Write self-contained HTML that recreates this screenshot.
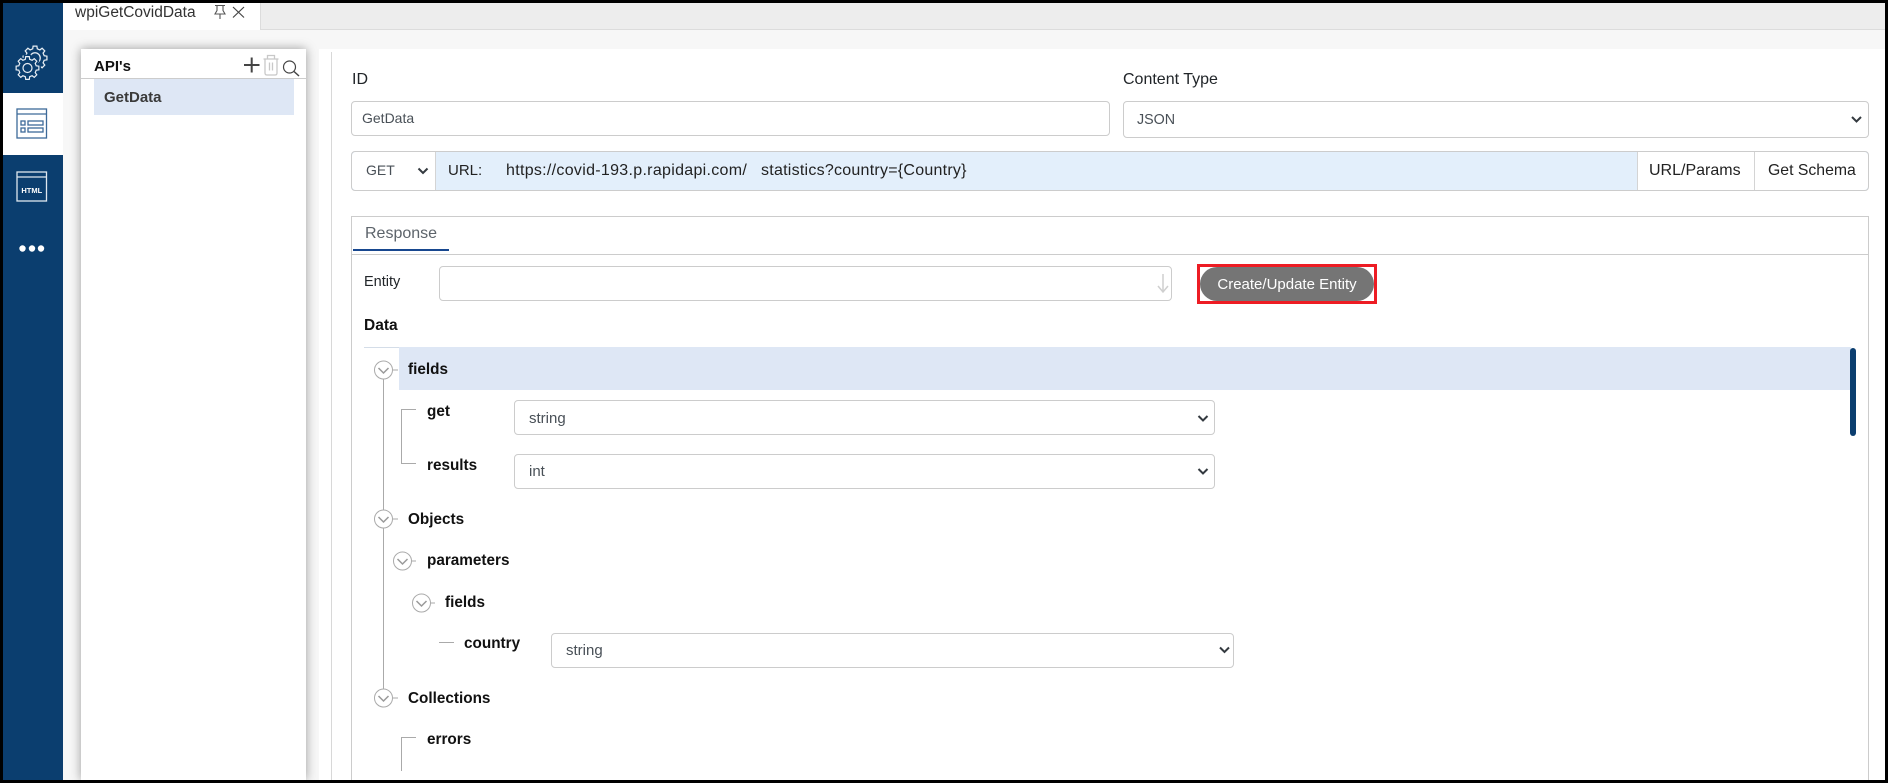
<!DOCTYPE html>
<html style="overflow:hidden;height:783px;"><head><meta charset="utf-8"><style>
html,body{margin:0;padding:0;background:#000;}
body{width:1888px;height:783px;overflow:hidden;position:relative;font-family:"Liberation Sans",sans-serif;color:#212529;}
.a{position:absolute;box-sizing:border-box;}
.t{position:absolute;white-space:pre;line-height:20px;font-size:14px;}
.b{font-weight:bold;font-size:15.300px;color:#111;}
.box{position:absolute;box-sizing:border-box;border:1px solid #ccc;border-radius:4px;background:#fff;}
.g{color:#495057;}
svg{position:absolute;overflow:visible;}
</style></head><body>
<div class="a" style="left:3px;top:3px;width:1882px;height:777px;background:#fff;overflow:hidden;">
</div>
<!-- backgrounds -->
<div class="a" style="left:63px;top:3px;width:1822px;height:27px;background:#ededed;border-bottom:1px solid #dcdcdc;"></div>
<div class="a" style="left:63px;top:30px;width:1822px;height:19px;background:#f7f7f7;"></div>
<div class="a" style="left:63px;top:49px;width:256px;height:731px;background:#f7f7f7;"></div>
<div class="a" style="left:63px;top:3px;width:198px;height:27px;background:#fff;border-right:1px solid #dcdcdc;"></div>
<div class="t" style="left:75px;top:3px;font-size:15.500px;line-height:20px;color:#333;">wpiGetCovidData</div>
<svg style="left:0;top:0" width="1888" height="783">
 <g fill="none" stroke="#555" stroke-width="1.1"><path d="M215 5.500h10M217 5.500v5l-2 3.500h10l-2-3.500v-5M220 14v5"/></g>
 <path d="M233 7l11 10.500M244 7l-11 10.500" stroke="#444" stroke-width="1.200" fill="none"/>
</svg>
<!-- sidebar -->
<div class="a" style="left:3px;top:3px;width:60px;height:777px;background:#0b3e6f;"></div>
<div class="a" style="left:3px;top:93px;width:60px;height:62px;background:#fff;"></div>
<svg style="left:0;top:0" width="70" height="260">
 <g fill="none" stroke="#e8eef4" stroke-width="1.200">
  <g transform="translate(35 58) scale(1.050)">
   <path d="M8.730 -2.180L11.360 -1.800L11.360 1.800L8.730 2.180L7.710 4.640L9.300 6.760L6.760 9.300L4.640 7.710L2.180 8.730L1.800 11.360L-1.800 11.360L-2.180 8.730L-4.640 7.710L-6.760 9.300L-9.300 6.760L-7.710 4.640L-8.730 2.180L-11.360 1.800L-11.360 -1.800L-8.730 -2.180L-7.710 -4.640L-9.300 -6.760L-6.760 -9.300L-4.640 -7.710L-2.180 -8.730L-1.800 -11.360L1.800 -11.360L2.180 -8.730L4.640 -7.710L6.760 -9.300L9.300 -6.760L7.710 -4.640Z"/>
   <circle r="5"/>
  </g>
  <g transform="translate(27.500 68)">
   <path fill="#0b3e6f" stroke="#0b3e6f" stroke-width="4" d="M8.730 -2.180L11.360 -1.800L11.360 1.800L8.730 2.180L7.710 4.640L9.300 6.760L6.760 9.300L4.640 7.710L2.180 8.730L1.800 11.360L-1.800 11.360L-2.180 8.730L-4.640 7.710L-6.760 9.300L-9.300 6.760L-7.710 4.640L-8.730 2.180L-11.360 1.800L-11.360 -1.800L-8.730 -2.180L-7.710 -4.640L-9.300 -6.760L-6.760 -9.300L-4.640 -7.710L-2.180 -8.730L-1.800 -11.360L1.800 -11.360L2.180 -8.730L4.640 -7.710L6.760 -9.300L9.300 -6.760L7.710 -4.640Z"/>
   <path d="M8.730 -2.180L11.360 -1.800L11.360 1.800L8.730 2.180L7.710 4.640L9.300 6.760L6.760 9.300L4.640 7.710L2.180 8.730L1.800 11.360L-1.800 11.360L-2.180 8.730L-4.640 7.710L-6.760 9.300L-9.300 6.760L-7.710 4.640L-8.730 2.180L-11.360 1.800L-11.360 -1.800L-8.730 -2.180L-7.710 -4.640L-9.300 -6.760L-6.760 -9.300L-4.640 -7.710L-2.180 -8.730L-1.800 -11.360L1.800 -11.360L2.180 -8.730L4.640 -7.710L6.760 -9.300L9.300 -6.760L7.710 -4.640Z"/>
   <circle r="4.500"/>
  </g>
 </g>
 <g fill="none" stroke="#3d6a99" stroke-width="1.300">
  <rect x="17" y="109" width="29.500" height="29"/><path d="M17 114h29.500"/>
  <rect x="21" y="121" width="4" height="4"/><rect x="21" y="128" width="4" height="4"/>
  <rect x="28" y="121" width="15" height="4"/><rect x="28" y="128" width="15" height="4"/>
 </g>
 <g fill="none" stroke="#dfe7ef" stroke-width="1.300">
  <rect x="17" y="172" width="29.500" height="29"/><path d="M17 177h29.500"/>
 </g>
 <text x="31.800" y="193" fill="#fff" font-family="Liberation Sans" font-weight="bold" font-size="7.500" text-anchor="middle">HTML</text>
 <circle cx="22.500" cy="248.500" r="3.200" fill="#fff"/><circle cx="32" cy="248.500" r="3.200" fill="#fff"/><circle cx="41" cy="248.500" r="3.200" fill="#fff"/>
</svg>
<!-- API panel -->
<div class="a" style="left:81px;top:49px;width:225px;height:731px;background:#fff;box-shadow:0 0 10px rgba(0,0,0,.38);"></div>
<div class="a" style="left:81px;top:78px;width:225px;height:1px;background:#ccc;"></div>
<div class="t" style="left:94px;top:57px;font-size:15px;font-weight:bold;color:#111;">API's</div>
<div class="a" style="left:94px;top:79px;width:200px;height:36px;background:#dee7f5;"></div>
<div class="t" style="left:104px;top:88px;font-size:15px;font-weight:bold;color:#3a3a3a;">GetData</div>
<svg style="left:0;top:0" width="310" height="90">
 <path d="M244 65h15.500M251.700 57.500v15" stroke="#444" stroke-width="2" fill="none"/>
 <g fill="none" stroke="#c8c8c8" stroke-width="1.300"><path d="M263.500 59h15M265 59v14q0 2 2 2h8q2 0 2-2v-14M267.500 59v-3.500h7v3.500M269.500 62.500v8M272.500 62.500v8"/></g>
 <circle cx="289.500" cy="67" r="6" fill="none" stroke="#444" stroke-width="1.200"/>
 <path d="M294 71.500l5 4.500" stroke="#444" stroke-width="1.500" fill="none"/>
</svg>
<!-- main -->
<div class="a" style="left:319px;top:49px;width:1566px;height:731px;background:#fff;"></div>
<div class="a" style="left:331px;top:52px;width:1px;height:728px;background:#d8d8d8;"></div>
<div class="t" style="left:352px;top:70px;font-size:16px;">ID</div>
<div class="t" style="left:1123px;top:70px;font-size:16px;">Content Type</div>
<div class="box" style="left:351px;top:101px;width:759px;height:35px;"></div>
<div class="t g" style="left:362px;top:108px;font-size:14px;">GetData</div>
<div class="box" style="left:1123px;top:101px;width:746px;height:37px;"></div>
<div class="t g" style="left:1137px;top:110px;font-size:14.300px;">JSON</div>
<!-- url row -->
<div class="box" style="left:351px;top:151px;width:1518px;height:40px;background:#e3effb;"></div>
<div class="a" style="left:352px;top:152px;width:84px;height:38px;background:#fff;border-right:1px solid #d4d4d4;border-radius:4px 0 0 4px;"></div>
<div class="a" style="left:1637px;top:152px;width:231px;height:38px;background:#fff;border-left:1px solid #d4d4d4;border-radius:0 4px 4px 0;"></div>
<div class="a" style="left:1754px;top:152px;width:1px;height:38px;background:#d4d4d4;"></div>
<div class="t g" style="left:366px;top:160px;font-size:14px;">GET</div>
<div class="t" style="left:448px;top:161px;color:#222;font-size:15px;">URL:</div>
<div class="t" style="left:506px;top:161px;color:#222;font-size:16px;letter-spacing:.3px;">https://covid-193.p.rapidapi.com/</div>
<div class="t" style="left:761px;top:161px;color:#222;font-size:16px;letter-spacing:.25px;">statistics?country={Country}</div>
<div class="t" style="left:1649px;top:161px;color:#222;font-size:16px;">URL/Params</div>
<div class="t" style="left:1768px;top:161px;color:#222;font-size:15.800px;">Get Schema</div>
<!-- response panel -->
<div class="a" style="left:351px;top:216px;width:1518px;height:566px;border:1px solid #ccc;"></div>
<div class="a" style="left:352px;top:254px;width:1516px;height:1px;background:#ccc;"></div>
<div class="t" style="left:365px;top:224px;color:#5d646b;font-size:16px;">Response</div>
<div class="a" style="left:353px;top:249px;width:96px;height:2px;background:#17478f;"></div>
<div class="t" style="left:364px;top:272px;font-size:14.500px;">Entity</div>
<div class="box" style="left:439px;top:266px;width:733px;height:35px;"></div>
<svg style="left:0;top:0" width="1888" height="783">
 <path d="M1163 274v17M1158 286l5 6 5-6" fill="none" stroke="#cfcfcf" stroke-width="1.500"/>
</svg>
<div class="a" style="left:1197px;top:264px;width:180px;height:40px;border:3px solid #ed1c24;background:#fff;"></div>
<div class="a" style="left:1200px;top:267px;width:174px;height:34px;background:#757575;border-radius:17px;"></div>
<div class="t" style="left:1200px;top:275px;width:174px;text-align:center;color:#fff;font-size:15px;">Create/Update Entity</div>
<div class="t b" style="left:364px;top:316px;font-size:15.500px;">Data</div>
<!-- tree -->
<div class="a" style="left:364px;top:347px;width:1487px;height:1px;background:#d4dde8;"></div>
<div class="a" style="left:399px;top:347px;width:1452px;height:43px;background:#dee7f5;"></div>
<div class="a" style="left:1850px;top:348px;width:6px;height:88px;background:#0b3e6f;border-radius:3px;"></div>
<div class="box" style="left:514px;top:400px;width:701px;height:35px;"></div>
<div class="box" style="left:514px;top:454px;width:701px;height:35px;"></div>
<div class="box" style="left:551px;top:633px;width:683px;height:35px;"></div>
<svg style="left:0;top:0" width="1888" height="783">
 <g fill="none" stroke="#aaa" stroke-width="1">
  <path d="M383.500 379v310"/>
  <path d="M416 409.500h-14.500v54H416"/>
  <path d="M416 737.500h-14.500V771"/>
  <path d="M439 642.500h15"/>
  <path d="M393 370h5M393 519h5M393 698h5M411 561h5M430 603h5"/>
  <g fill="#fff">
  <circle cx="383.500" cy="370" r="9"/><circle cx="383.500" cy="519" r="9"/><circle cx="383.500" cy="698" r="9"/>
  <circle cx="402.500" cy="561" r="9"/><circle cx="421.500" cy="603" r="9"/></g>
 </g>
 <g fill="none" stroke="#999" stroke-width="1.500">
  <path d="M378.500 368l5 5 5-5M378.500 517l5 5 5-5M378.500 696l5 5 5-5M397.500 559l5 5 5-5M416.500 601l5 5 5-5"/>
 </g>
 <g fill="none" stroke="#343a40" stroke-width="2">
  <path d="M418.500 168.500l4.500 4.500 4.500-4.500"/>
  <path d="M1852 117l4.500 4.500 4.500-4.500"/>
  <path d="M1198.500 416l4.500 4.500 4.500-4.500"/>
  <path d="M1198.500 469l4.500 4.500 4.500-4.500"/>
  <path d="M1220 647.500l4.500 4.500 4.500-4.500"/>
 </g>
</svg>
<div class="t b" style="left:408px;top:360px;">fields</div>
<div class="t b" style="left:427px;top:402px;">get</div>
<div class="t g" style="left:529px;top:409px;font-size:15px;">string</div>
<div class="t b" style="left:427px;top:456px;">results</div>
<div class="t g" style="left:529px;top:462px;font-size:15px;">int</div>
<div class="t b" style="left:408px;top:510px;">Objects</div>
<div class="t b" style="left:427px;top:551px;">parameters</div>
<div class="t b" style="left:445px;top:593px;">fields</div>
<div class="t b" style="left:464px;top:634px;">country</div>
<div class="t g" style="left:566px;top:641px;font-size:15px;">string</div>
<div class="t b" style="left:408px;top:689px;">Collections</div>
<div class="t b" style="left:427px;top:730px;">errors</div>
<!-- black frame -->
<div class="a" style="left:0;top:0;width:1888px;height:3px;background:#000;"></div>
<div class="a" style="left:0;top:780px;width:1888px;height:3px;background:#000;"></div>
<div class="a" style="left:0;top:0;width:3px;height:783px;background:#000;"></div>
<div class="a" style="left:1885px;top:0;width:3px;height:783px;background:#000;"></div>
</body></html>
